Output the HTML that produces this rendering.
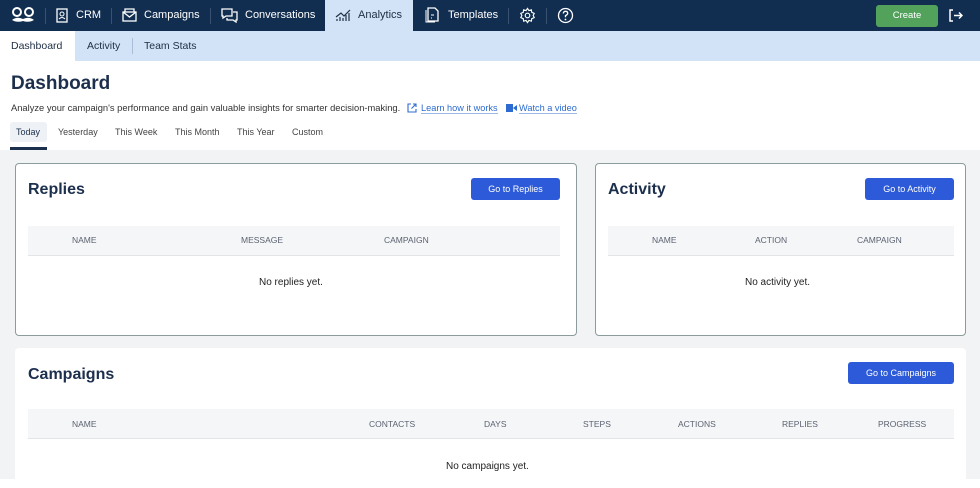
<!DOCTYPE html>
<html><head><style>
*{margin:0;padding:0;box-sizing:border-box}
body{width:980px;height:479px;overflow:hidden;font-family:"Liberation Sans",sans-serif;background:#fff;position:relative}
.a{position:absolute;white-space:nowrap}
.nav{left:0;top:0;width:980px;height:31px;background:#112d4f}
.nt{color:#fff;font-size:11px;top:9px}
.sep{top:8px;width:1px;height:16px;background:#3a5272}
.sub{left:0;top:31px;width:980px;height:30px;background:#d2e3f7}
.st{font-size:10.5px;color:#1e2e44;top:40px}
.gray{left:0;top:150px;width:980px;height:329px;background:#f2f3f5}
.card{background:#fff;border:1.5px solid #8c9b9b;border-radius:4px}
h2{position:absolute;font-size:16px;color:#1c2f4c;font-weight:bold}
.btn{background:#2c5ad8;color:#fff;font-size:9px;border-radius:3px;text-align:center;line-height:22px;height:22px}
.th{background:#f5f6f8;border-bottom:1px solid #e2e4e8;height:30px}
.h{font-size:8.5px;color:#5b6270;top:235px}
.e{font-size:10px;color:#222}
</style></head><body>
<div class="a nav"></div>
<svg class="a" style="left:10px;top:6px" width="26" height="20" viewBox="0 0 26 20"><circle cx="7" cy="6" r="4" fill="none" stroke="#fff" stroke-width="2"/><circle cx="19" cy="6" r="4" fill="none" stroke="#fff" stroke-width="2"/><path d="M2 14 Q7 10 13 13 Q19 10 24 14 Q19 17 13 15 Q7 17 2 14Z" fill="#fff"/></svg>
<div class="a sep" style="left:45px"></div>
<svg class="a" style="left:56px;top:8px" width="12" height="15" viewBox="0 0 12 15"><rect x="1" y="1" width="10" height="13" fill="none" stroke="#fff" stroke-width="1.3"/><circle cx="6" cy="6" r="2" fill="none" stroke="#fff"/><path d="M3 11Q6 8 9 11" stroke="#fff" fill="none"/></svg>
<div class="a nt" style="left:76px">CRM</div>
<div class="a sep" style="left:111px"></div>
<svg class="a" style="left:122px;top:8px" width="15" height="14" viewBox="0 0 15 14"><rect x="1" y="4" width="13" height="9" fill="none" stroke="#fff" stroke-width="1.3"/><path d="M1 4L7.5 9L14 4M3 4V1H12V4" fill="none" stroke="#fff" stroke-width="1.3"/></svg>
<div class="a nt" style="left:144px">Campaigns</div>
<div class="a sep" style="left:210px"></div>
<svg class="a" style="left:221px;top:8px" width="17" height="15" viewBox="0 0 17 15"><path d="M1 1H11V8H5L2 10V8H1Z M6 10V12H12L15 14V12H16V4H12" fill="none" stroke="#fff" stroke-width="1.3"/></svg>
<div class="a nt" style="left:245px">Conversations</div>
<div class="a" style="left:325px;top:0;width:88px;height:31px;background:#d2e3f7"></div>
<svg class="a" style="left:335px;top:8px" width="17" height="14" viewBox="0 0 17 14"><path d="M1 9L6 5L9 8L15 2" fill="none" stroke="#1e2e44" stroke-width="1.2"/><path d="M2 13V11M5 13V9M8 13V10M11 13V7M14 13V5" stroke="#1e2e44" stroke-width="1.2"/></svg>
<div class="a nt" style="left:358px;color:#1e2e44">Analytics</div>
<svg class="a" style="left:425px;top:7px" width="14" height="16" viewBox="0 0 14 16"><path d="M3 1H10L13 4V14H3Z" fill="none" stroke="#fff" stroke-width="1.3"/><path d="M1 3V15H10M6 8H9M6 11H7" stroke="#fff" fill="none"/></svg>
<div class="a nt" style="left:448px">Templates</div>
<div class="a sep" style="left:508px"></div>
<svg class="a" style="left:519px;top:7px" width="17" height="17" viewBox="0 0 24 24"><circle cx="12" cy="12" r="3.2" fill="none" stroke="#fff" stroke-width="1.6"/><path d="M12 2l2 3 3.5-1 .5 3.5 3.5 1.5-1.5 3 1.5 3-3.5 1.5-.5 3.5-3.5-1-2 3-2-3-3.5 1-.5-3.5L2.5 15l1.5-3-1.5-3 3.5-1.5.5-3.5 3.5 1z" fill="none" stroke="#fff" stroke-width="1.6"/></svg>
<div class="a sep" style="left:546px"></div>
<svg class="a" style="left:557px;top:7px" width="17" height="17" viewBox="0 0 17 17"><circle cx="8.5" cy="8.5" r="7" fill="none" stroke="#fff" stroke-width="1.3"/><path d="M6.3 6.5Q6.5 4.3 8.5 4.3Q10.7 4.3 10.7 6.3Q10.7 7.7 8.5 8.6V10.3" fill="none" stroke="#fff" stroke-width="1.3"/><circle cx="8.5" cy="12.5" r=".9" fill="#fff"/></svg>
<div class="a" style="left:876px;top:5px;width:62px;height:22px;background:#52a25c;border-radius:3px;color:#fff;font-size:9.5px;text-align:center;line-height:22px">Create</div>
<svg class="a" style="left:949px;top:9px" width="14" height="13" viewBox="0 0 14 13"><path d="M4 1H1V12H4M5 6.5H13M10 3.5L13 6.5L10 9.5" fill="none" stroke="#fff" stroke-width="1.5"/></svg>

<div class="a sub"></div>
<div class="a" style="left:0;top:31px;width:75px;height:30px;background:#fff"></div>
<div class="a st" style="left:11px">Dashboard</div>
<div class="a" style="left:132px;top:38px;width:1px;height:16px;background:#aabdd6"></div>
<div class="a st" style="left:87px">Activity</div>
<div class="a st" style="left:144px">Team Stats</div>

<div class="a" style="left:11px;top:73px;font-size:19px;font-weight:bold;color:#1c2f4c">Dashboard</div>
<div class="a" style="left:11px;top:103px;font-size:9.35px;color:#333">Analyze your campaign's performance and gain valuable insights for smarter decision-making.</div>
<svg class="a" style="left:407px;top:103px" width="10" height="10" viewBox="0 0 10 10"><path d="M4 1H1V9H9V6M6 1H9V4M9 1L4.5 5.5" fill="none" stroke="#2c6bd0" stroke-width="1.1"/></svg>
<div class="a" style="left:421px;top:103px;font-size:9.2px;color:#2c6bd0;border-bottom:1px solid #9bb9e6">Learn how it works</div>
<svg class="a" style="left:506px;top:104px" width="11" height="8" viewBox="0 0 11 8"><rect x="0" y="0" width="7" height="8" fill="#2c6bd0"/><path d="M7 4L11 1V7Z" fill="#2c6bd0"/></svg>
<div class="a" style="left:519px;top:103px;font-size:9.2px;color:#2c6bd0;border-bottom:1px solid #9bb9e6">Watch a video</div>
<div class="a" style="left:10px;top:122px;width:37px;height:20px;background:#eef1f6;border-radius:3px"></div>
<div class="a" style="left:10px;top:147px;width:37px;height:3px;background:#1c2f4c"></div>
<div class="a" style="left:16px;top:127px;font-size:9px;color:#1c2f4c">Today</div>
<div class="a" style="left:58px;top:127px;font-size:9px;color:#444">Yesterday</div>
<div class="a" style="left:115px;top:127px;font-size:9px;color:#444">This Week</div>
<div class="a" style="left:175px;top:127px;font-size:9px;color:#444">This Month</div>
<div class="a" style="left:237px;top:127px;font-size:9px;color:#444">This Year</div>
<div class="a" style="left:292px;top:127px;font-size:9px;color:#444">Custom</div>

<div class="a gray"></div>
<div class="a card" style="left:15px;top:163px;width:562px;height:173px"></div>
<h2 style="left:28px;top:181px">Replies</h2>
<div class="a btn" style="left:471px;top:178px;width:89px">Go to Replies</div>
<div class="a th" style="left:28px;top:226px;width:532px"></div>
<div class="a h" style="left:72px">NAME</div>
<div class="a h" style="left:241px">MESSAGE</div>
<div class="a h" style="left:384px">CAMPAIGN</div>
<div class="a e" style="left:259px;top:277px">No replies yet.</div>

<div class="a card" style="left:595px;top:163px;width:371px;height:173px"></div>
<h2 style="left:608px;top:181px">Activity</h2>
<div class="a btn" style="left:865px;top:178px;width:89px">Go to Activity</div>
<div class="a th" style="left:608px;top:226px;width:346px"></div>
<div class="a h" style="left:652px">NAME</div>
<div class="a h" style="left:755px">ACTION</div>
<div class="a h" style="left:857px">CAMPAIGN</div>
<div class="a e" style="left:745px;top:277px">No activity yet.</div>

<div class="a" style="left:15px;top:348px;width:951px;height:140px;background:#fff;border-radius:4px"></div>
<h2 style="left:28px;top:366px">Campaigns</h2>
<div class="a btn" style="left:848px;top:362px;width:106px">Go to Campaigns</div>
<div class="a th" style="left:28px;top:409px;width:926px"></div>
<div class="a h" style="left:72px;top:419px">NAME</div>
<div class="a h" style="left:369px;top:419px">CONTACTS</div>
<div class="a h" style="left:484px;top:419px">DAYS</div>
<div class="a h" style="left:583px;top:419px">STEPS</div>
<div class="a h" style="left:678px;top:419px">ACTIONS</div>
<div class="a h" style="left:782px;top:419px">REPLIES</div>
<div class="a h" style="left:878px;top:419px">PROGRESS</div>
<div class="a e" style="left:446px;top:461px">No campaigns yet.</div>
</body></html>
